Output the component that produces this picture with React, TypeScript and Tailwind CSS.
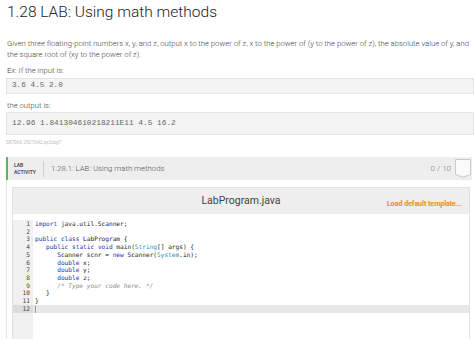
import React from 'react';

const kw = 'text-[#1b2fb0]';
const ty = 'text-[#2b8fa8]';

function K({ children }: { children: React.ReactNode }) {
  return <span className={kw}>{children}</span>;
}

function T({ children }: { children: React.ReactNode }) {
  return <span className={ty}>{children}</span>;
}

const lines: React.ReactNode[] = [
  <><K>import</K> java.util.Scanner;</>,
  <></>,
  <><K>public</K> <K>class</K> LabProgram {'{'}</>,
  <>{'   '}<K>public</K> <K>static</K> <K>void</K> main(<T>String</T>[] args) {'{'}</>,
  <>{'      '}Scanner scnr = <K>new</K> Scanner(<T>System</T>.in);</>,
  <>{'      '}<K>double</K> x;</>,
  <>{'      '}<K>double</K> y;</>,
  <>{'      '}<K>double</K> z;</>,
  <>{'      '}<span className="italic text-[#8a8a8a]">/* Type your code here. */</span></>,
  <>{'   }'}</>,
  <>{'}'}</>,
  <></>,
];

export default function App() {
  return (
    <div className="w-[474px] h-[339px] overflow-hidden bg-white font-['Roboto',sans-serif]">
      <div className="pl-[7px]">
        <h1 className="pt-[2px] text-[15.5px] font-light leading-[20px] text-[#222]">1.28 LAB: Using math methods</h1>
        <p className="mt-[15.5px] text-[7.7px] leading-[11px] font-light text-[#444] pr-[2px]">
          Given three floating-point numbers x, y, and z, output x to the power of z, x to the power of (y to the power of z), the absolute value of y, and the square root of (xy to the power of z).
        </p>
        <p className="mt-[5px] text-[7.7px] leading-[11px] font-light text-[#444]">Ex: If the input is:</p>
      </div>
      <div className="ml-[6px] mt-[2.5px] h-[16px] bg-[#f4f4f4] border border-[#e4e4e4] pl-[5px] flex items-center font-['Liberation_Mono',monospace] text-[7.7px] text-[#666]">
        3.6 4.5 2.0
      </div>
      <p className="pl-[7px] mt-[5.5px] text-[7.7px] leading-[11px] font-light text-[#444]">the output is:</p>
      <div className="ml-[6px] mt-[1.5px] h-[23px] bg-[#f4f4f4] border border-[#e4e4e4] pl-[5px] flex items-center font-['Liberation_Mono',monospace] text-[7.8px] text-[#666]">
        12.96 1.841304610218211E11 4.5 16.2
      </div>
      <p className="pl-[6px] mt-[5px] text-[4.8px] leading-[6px] text-[#bdbdbd]">587066.2927642.qx3zqy7</p>

      <div className="ml-[6px] mt-[11px] mr-[2px] h-[23px] bg-[#eeeeee] border-l-[2px] border-[#5cb85c] flex items-center">
        <div className="pl-[6px] w-[35px] text-[5px] leading-[6.5px] font-bold text-[#555] uppercase">
          <div>Lab</div>
          <div>Activity</div>
        </div>
        <div className="w-px h-[16px] bg-[#cfcfcf]" />
        <div className="pl-[7px] flex-1 text-[7.8px] text-[#555] font-light">1.28.1: LAB: Using math methods</div>
        <div className="text-[8px] text-[#777] font-light mr-[4px]">0 / 10</div>
        <svg width="16" height="19" viewBox="0 0 16 19" className="mr-[1px]">
          <path d="M0.5 0.5 H15.5 V15.5 L8 18.2 L0.5 15.5 Z" fill="#fafafa" stroke="#c8c8c8" strokeWidth="1" />
        </svg>
      </div>

      <div className="ml-[6px] border-l border-[#e5e5e5] pt-[7px] pl-[5px] pr-[4px] h-[200px]">
        <div className="border border-[#e2e2e2]">
          <div className="h-[26px] bg-[#eeeeee] relative flex items-center justify-center">
            <span className="text-[10.5px] text-[#444]">LabProgram.java</span>
            <span className="absolute right-[7px] top-[11px] text-[7px] font-bold text-[#e8873a]">Load default template...</span>
          </div>
          <div className="flex bg-white pt-[6px] font-['DejaVu_Sans_Mono',monospace] text-[6.15px] leading-[7.7px] whitespace-pre">
            <div className="w-full">
              {lines.map((l, i) => (
                <div key={i} className={`flex ${i === 11 ? 'bg-[#e8e8e8]' : ''}`}>
                  <div className={`w-[20px] shrink-0 pr-[3px] text-right text-[#444] ${i === 11 ? 'bg-[#dcdcdc]' : 'bg-[#f0f0f0]'}`}>{i + 1}</div>
                  <div className="pl-[2px] text-[#222] flex-1">
                    {i === 11 ? <span className="inline-block w-px h-[7px] bg-[#999] align-middle" /> : l}
                  </div>
                </div>
              ))}
              <div className="flex h-[40px]">
                <div className="w-[20px] bg-[#f0f0f0]" />
              </div>
            </div>
          </div>
        </div>
      </div>
    </div>
  );
}
